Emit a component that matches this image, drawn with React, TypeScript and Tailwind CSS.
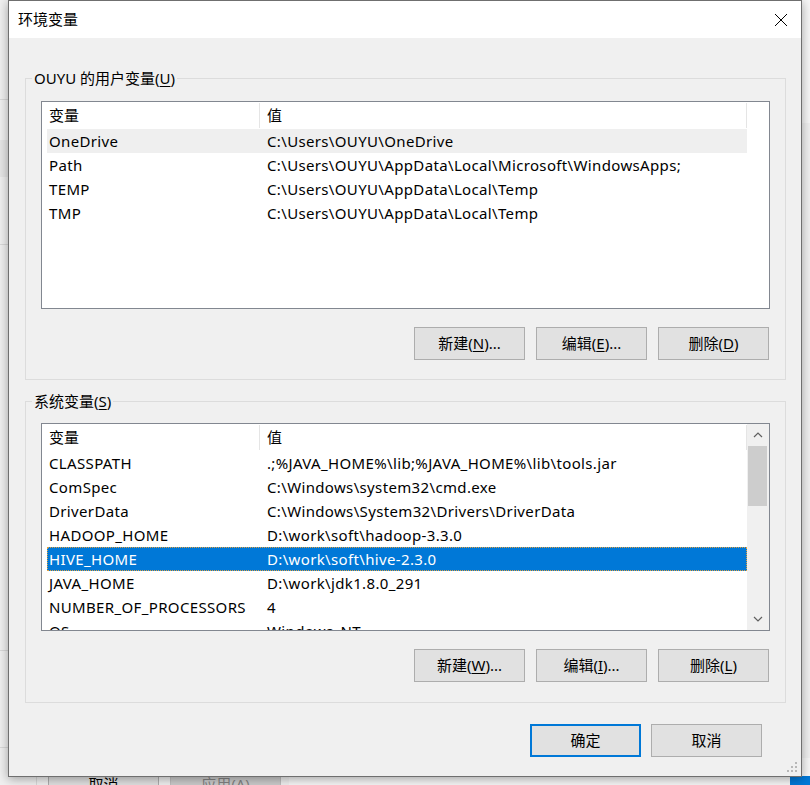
import React from "react";

type Row = [string, string];

const userVars: Row[] = [
  ["OneDrive", "C:\\Users\\OUYU\\OneDrive"],
  ["Path", "C:\\Users\\OUYU\\AppData\\Local\\Microsoft\\WindowsApps;"],
  ["TEMP", "C:\\Users\\OUYU\\AppData\\Local\\Temp"],
  ["TMP", "C:\\Users\\OUYU\\AppData\\Local\\Temp"],
];

const sysVars: Row[] = [
  ["CLASSPATH", ".;%JAVA_HOME%\\lib;%JAVA_HOME%\\lib\\tools.jar"],
  ["ComSpec", "C:\\Windows\\system32\\cmd.exe"],
  ["DriverData", "C:\\Windows\\System32\\Drivers\\DriverData"],
  ["HADOOP_HOME", "D:\\work\\soft\\hadoop-3.3.0"],
  ["HIVE_HOME", "D:\\work\\soft\\hive-2.3.0"],
  ["JAVA_HOME", "D:\\work\\jdk1.8.0_291"],
  ["NUMBER_OF_PROCESSORS", "4"],
  ["OS", "Windows_NT"],
];

function Key({ k }: { k: string }) {
  return <span className="underline underline-offset-2">{k}</span>;
}

function WinButton({
  children,
  primary,
  disabled,
}: {
  children: React.ReactNode;
  primary?: boolean;
  disabled?: boolean;
}) {
  return (
    <button
      className={
        primary
          ? "flex h-[33px] w-[111px] items-center justify-center border-2 border-[#0078d7] bg-[#e1e1e1] text-[15px] text-black"
          : disabled
            ? "flex h-[33px] w-[111px] items-center justify-center border border-[#bfbfbf] bg-[#cccccc] text-[15px] text-[#838383]"
            : "flex h-[33px] w-[111px] items-center justify-center border border-[#adadad] bg-[#e1e1e1] text-[15px] text-black"
      }
    >
      {children}
    </button>
  );
}

function Chevron({ up }: { up?: boolean }) {
  return (
    <svg width="10" height="6" viewBox="0 0 10 6">
      <polyline
        points={up ? "1,5 5,1 9,5" : "1,1 5,5 9,1"}
        fill="none"
        stroke="#606060"
        strokeWidth="1.2"
      />
    </svg>
  );
}

function VarList({
  rows,
  selected,
  focused,
  scrollbar,
}: {
  rows: Row[];
  selected: number;
  focused?: boolean;
  scrollbar?: boolean;
}) {
  return (
    <div className="flex h-[208px] overflow-hidden border border-[#828790] bg-white">
      <div className="min-w-0 flex-1">
        <div className="flex h-[27px] items-center pl-[5px]">
          <div className="flex h-[25px] w-[213px] items-center border-r border-[#e5e5e5] pl-[2px]">
            变量
          </div>
          <div className="flex h-[25px] w-[487px] items-center border-r border-[#e5e5e5] pl-[7px]">
            值
          </div>
        </div>
        {rows.map(([name, value], i) => {
          const sel = i === selected;
          let cls = "ml-[5px] flex h-[24px] w-[700px] items-center whitespace-nowrap tracking-[0.35px]";
          if (sel && focused) cls += " bg-[#0078d7] text-white outline-1 outline-dotted outline-[#e0a040] -outline-offset-1";
          else if (sel) cls += " bg-[#efefef]";
          return (
            <div key={name} className={cls}>
              <div className="w-[212px] pl-[2px]">{name}</div>
              <div className="flex-1 pl-[8px]">{value}</div>
            </div>
          );
        })}
      </div>
      {scrollbar && (
        <div className="flex w-[22px] flex-col bg-[#f0f0f0]">
          <div className="flex h-[22px] items-center justify-center">
            <Chevron up />
          </div>
          <div className="flex-1 pl-px pr-[2px]">
            <div className="h-[60px] bg-[#cdcdcd]" />
          </div>
          <div className="flex h-[22px] items-center justify-center">
            <Chevron />
          </div>
        </div>
      )}
    </div>
  );
}

export default function App() {
  return (
    <div className="relative h-[785px] w-[810px] overflow-hidden bg-[#f0f0f0] font-['Noto_Sans','Noto_Sans_CJK_SC',sans-serif] text-[15px] text-black">
      {/* parent window peeking out behind the dialog */}
      <div className="absolute left-0 top-[99px] h-px w-[8px] bg-[#d9d9d9]" />
      <div className="absolute left-0 top-[140px] h-[37px] w-[8px] bg-[#e6e6e6]" />
      <div className="absolute left-0 top-[244px] h-px w-[8px] bg-[#d9d9d9]" />
      <div className="absolute left-0 top-[650px] h-px w-[8px] bg-[#d9d9d9]" />
      <div className="absolute left-0 top-[747px] h-px w-[8px] bg-[#d9d9d9]" />
      <div className="absolute right-0 top-0 h-[123px] w-[8px] bg-[#f7f7f7]" />
      <div className="absolute left-[36px] top-[758px] h-[40px] w-px bg-[#d9d9d9]" />
      <div className="absolute left-[289px] top-[758px] h-[40px] w-[521px] bg-[#f7f7f7]" />
      <div className="absolute left-[48px] top-[768px] flex gap-[11px]">
        <WinButton>取消</WinButton>
        <WinButton disabled>应用(A)</WinButton>
      </div>
      <div className="absolute right-0 top-[776px] h-[9px] w-[20px] bg-[#0078d7]" />

      {/* 环境变量 dialog */}
      <div className="absolute left-[8px] top-0 flex h-[777px] w-[794px] flex-col border border-[#6f6f6f] bg-[#f0f0f0] shadow-[0_2px_10px_rgba(0,0,0,0.35)]">
        <div className="flex h-[37px] items-center justify-between bg-white pl-[9px] pr-[13px]">
          <span>环境变量</span>
          <svg width="14" height="14" viewBox="0 0 14 14">
            <path d="M1 1 L13 13 M13 1 L1 13" stroke="#000" strokeWidth="1" fill="none" />
          </svg>
        </div>

        <fieldset className="ml-[16px] mr-[15px] mt-[30px] border border-[#dcdcdc] px-[15px] pb-[19px] pt-[13px]">
          <legend className="-ml-[9px] px-[2px] leading-[20px]">
            OUYU 的用户变量(<Key k="U" />)
          </legend>
          <VarList rows={userVars} selected={0} />
          <div className="mt-[18px] flex justify-end gap-[11px] pr-px">
            <WinButton>
              新建(<Key k="N" />)...
            </WinButton>
            <WinButton>
              编辑(<Key k="E" />)...
            </WinButton>
            <WinButton>
              删除(<Key k="D" />)
            </WinButton>
          </div>
        </fieldset>

        <fieldset className="ml-[16px] mr-[15px] mt-[11px] border border-[#dcdcdc] px-[15px] pb-[20px] pt-[12px]">
          <legend className="-ml-[9px] px-[2px] leading-[20px]">
            系统变量(<Key k="S" />)
          </legend>
          <VarList rows={sysVars} selected={4} focused scrollbar />
          <div className="mt-[18px] flex justify-end gap-[11px] pr-px">
            <WinButton>
              新建(<Key k="W" />)...
            </WinButton>
            <WinButton>
              编辑(<Key k="I" />)...
            </WinButton>
            <WinButton>
              删除(<Key k="L" />)
            </WinButton>
          </div>
        </fieldset>

        <div className="mt-[21px] flex justify-end gap-[10px] pr-[39px]">
          <WinButton primary>确定</WinButton>
          <WinButton>取消</WinButton>
        </div>

        <svg className="absolute bottom-[3px] right-[3px]" width="11" height="11" viewBox="0 0 11 11">
          <g fill="#b8b8b8">
            <rect x="8" y="0" width="2" height="2" />
            <rect x="4" y="4" width="2" height="2" />
            <rect x="8" y="4" width="2" height="2" />
            <rect x="0" y="8" width="2" height="2" />
            <rect x="4" y="8" width="2" height="2" />
            <rect x="8" y="8" width="2" height="2" />
          </g>
        </svg>
      </div>
    </div>
  );
}
